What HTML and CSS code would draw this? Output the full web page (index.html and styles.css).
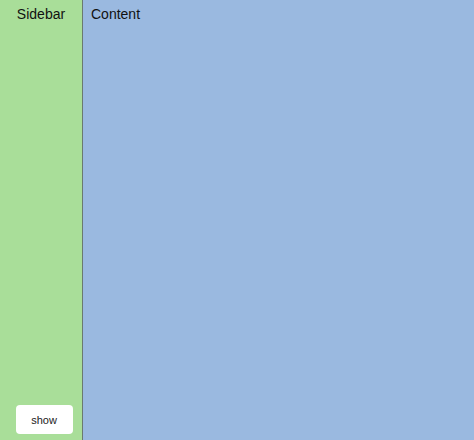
FILE: index.html
```html
<!DOCTYPE html>
<html>
<head>
<meta charset="utf-8">
<link rel="stylesheet" href="styles.css">
</head>
<body>
<div class="layout">
  <aside class="sidebar">
    <div class="title">Sidebar</div>
    <div class="spacer"></div>
    <button class="show-btn">show</button>
  </aside>
  <main class="content">
    <div class="title">Content</div>
  </main>
</div>
</body>
</html>
```
FILE: styles.css
```css
html, body {
  margin: 0;
  padding: 0;
  height: 100%;
}
body {
  font-family: "Liberation Sans", Arial, sans-serif;
  font-size: 14px;
  color: #111;
}
.layout {
  display: flex;
  height: 440px;
}
.sidebar {
  width: 82px;
  background: #a9de99;
  border-right: 1px solid #6a7a70;
  display: flex;
  flex-direction: column;
  align-items: center;
  box-sizing: content-box;
}
.sidebar .title {
  padding-top: 6px;
  line-height: 17px;
}
.spacer {
  flex: 1;
}
.show-btn {
  width: 57px;
  height: 29px;
  margin: 0 0 6px 6px;
  background: #fff;
  border: none;
  border-radius: 4px;
  font-family: "Liberation Sans", Arial, sans-serif;
  font-size: 11px;
  color: #222;
  padding: 0;
}
.content {
  flex: 1;
  background: #9ab9e0;
  padding: 6px 8px;
}
.content .title {
  line-height: 17px;
}
```
